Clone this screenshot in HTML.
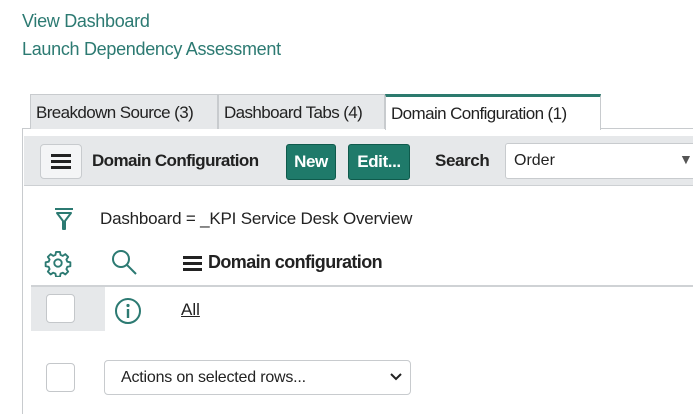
<!DOCTYPE html>
<html><head><style>
*{margin:0;padding:0;box-sizing:border-box}
body{width:693px;height:414px;overflow:hidden;background:#fff;font-family:"Liberation Sans",sans-serif;color:#222;position:relative}
.a{position:absolute;white-space:nowrap}
.link{color:#2c7a72;font-size:18px;letter-spacing:-0.3px}
.tab{position:absolute;top:94px;height:35px;background:#e6e8ea;border:1px solid #c8cbce;border-bottom:none;font-size:17px;line-height:36px;padding-left:5px;color:#222;letter-spacing:-0.6px}
.btn{position:absolute;top:144px;height:36px;background:#1f7a6a;border:1px solid #0f5a4c;border-radius:3px;color:#fff;font-weight:bold;font-size:17px;line-height:34px;text-align:center;letter-spacing:-0.4px}
.cb{position:absolute;width:29px;height:29px;border:1px solid #c4c7ca;border-radius:4px;background:#fff}
</style></head><body>
<div class="a link" style="left:22px;top:11px">View Dashboard</div>
<div class="a link" style="left:22px;top:39px">Launch Dependency Assessment</div>

<div class="a" style="left:22px;top:128px;width:1px;height:286px;background:#c8cbce"></div>
<div class="a" style="left:22px;top:128px;width:671px;height:1px;background:#c8cbce"></div>
<div class="tab" style="left:30px;width:188px">Breakdown Source (3)</div>
<div class="tab" style="left:218px;width:167px">Dashboard Tabs (4)</div>
<div class="tab" style="left:385px;width:216px;background:#fff;border-top:3px solid #2c7a6e;height:36px;line-height:33px">Domain Configuration (1)</div>

<div class="a" style="left:24px;top:136px;width:669px;height:50px;background:#e6e8ea;border-bottom:1px solid #cdd0d3"></div>
<div class="a" style="left:40px;top:144px;width:42px;height:35px;background:#f4f5f6;border:1px solid #c8cbce;border-radius:4px"></div>
<div class="a" style="left:51px;top:154px;width:20px;height:3px;background:#222;box-shadow:0 6px 0 #222,0 12px 0 #222"></div>
<div class="a" style="left:92px;top:151px;font-size:17px;font-weight:bold;letter-spacing:-0.6px">Domain Configuration</div>
<div class="btn" style="left:286px;width:50px">New</div>
<div class="btn" style="left:348px;width:62px">Edit...</div>
<div class="a" style="left:435px;top:151px;font-size:17px;font-weight:bold;letter-spacing:-0.4px">Search</div>
<div class="a" style="left:505px;top:143px;width:200px;height:36px;background:#fff;border:1px solid #c8cbce;border-radius:3px;font-size:16px;line-height:34px;padding-left:8px">Order</div>
<div class="a" style="left:679px;top:151px;font-size:14px;color:#555">▼</div>

<svg class="a" style="left:53px;top:206px" width="22" height="30" viewBox="0 0 22 30"><path d="M2 3H20M4 7H18L12 15V23H10V15Z" fill="none" stroke="#2c7a72" stroke-width="2" stroke-linejoin="round"/></svg>
<div class="a" style="left:100px;top:209px;font-size:17px;letter-spacing:-0.2px">Dashboard = _KPI Service Desk Overview</div>

<svg class="a" style="left:44px;top:249px" width="28" height="28" viewBox="0 0 24 24"><circle cx="12" cy="12" r="3.2" fill="none" stroke="#2c7a72" stroke-width="1.6"/><path d="M10.3 2.5h3.4l.5 2.6 1.9.8 2.2-1.5 2.4 2.4-1.5 2.2.8 1.9 2.6.5v3.4l-2.6.5-.8 1.9 1.5 2.2-2.4 2.4-2.2-1.5-1.9.8-.5 2.6h-3.4l-.5-2.6-1.9-.8-2.2 1.5-2.4-2.4 1.5-2.2-.8-1.9-2.6-.5v-3.4l2.6-.5.8-1.9-1.5-2.2 2.4-2.4 2.2 1.5 1.9-.8z" fill="none" stroke="#2c7a72" stroke-width="1.6" stroke-linejoin="round"/></svg>
<svg class="a" style="left:110px;top:248px" width="30" height="30" viewBox="0 0 30 30"><circle cx="11" cy="11" r="8" fill="none" stroke="#2c7a72" stroke-width="2"/><path d="M17 17L26 26" stroke="#2c7a72" stroke-width="2"/></svg>
<div class="a" style="left:183px;top:256px;width:19px;height:3px;background:#222;box-shadow:0 6px 0 #222,0 12px 0 #222"></div>
<div class="a" style="left:208px;top:252px;font-size:18px;font-weight:bold;letter-spacing:-0.6px">Domain configuration</div>

<div class="a" style="left:31px;top:285px;width:662px;height:2px;background:#cfd2d5"></div>
<div class="a" style="left:31px;top:287px;width:74px;height:44px;background:#e6e8ea"></div>
<div class="cb" style="left:46px;top:294px"></div>
<svg class="a" style="left:114px;top:297px" width="30" height="30" viewBox="0 0 30 30"><circle cx="14" cy="14" r="12" fill="none" stroke="#2c7a72" stroke-width="2"/><circle cx="14" cy="8.5" r="1.6" fill="#2c7a72"/><path d="M14 12V21" stroke="#2c7a72" stroke-width="2.4"/></svg>
<div class="a" style="left:181px;top:300px;font-size:17px;text-decoration:underline">All</div>

<div class="cb" style="left:46px;top:363px"></div>
<div class="a" style="left:104px;top:360px;width:307px;height:35px;border:1px solid #c8cbce;border-radius:4px;font-size:16px;line-height:33px;padding-left:16px;letter-spacing:-0.2px">Actions on selected rows...</div>
<svg class="a" style="left:389px;top:372px" width="14" height="10" viewBox="0 0 14 10"><path d="M2 2L7 7L12 2" fill="none" stroke="#222" stroke-width="2"/></svg>
</body></html>
